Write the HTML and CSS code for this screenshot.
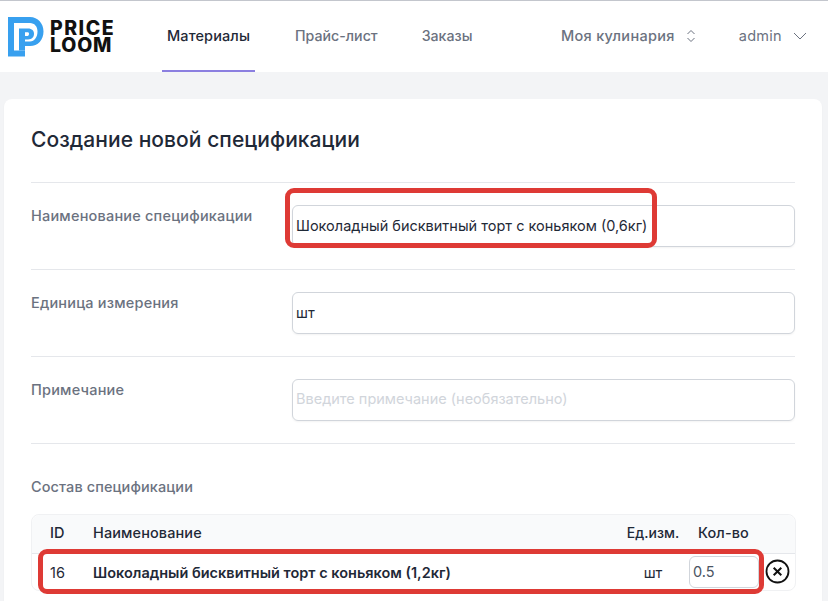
FILE: index.html
```html
<!DOCTYPE html>
<html lang="ru">
<head>
<meta charset="utf-8">
<title>Создание новой спецификации</title>
<link rel="stylesheet" href="styles.css">
</head>
<body>
<header class="topbar">
  <div class="logo">
    <svg class="logo-mark" width="36" height="40" viewBox="0 0 36 40">
      <path fill="#38a0ef" d="M0 0H22C30 0 35.500 6.500 35.500 14.500C35.500 23 30 29 22 29H15V24.500H22C26.500 24.500 29.500 20 29.500 14.500C29.500 9.500 26.500 6 22 6H6V33.500H17V39.500H0Z"/>
      <path fill="#38a0ef" d="M11 11.500H20C24 11.500 26 13.800 26 16.800C26 20 24 22.500 20 22.500H17V19H19.500C20.500 19 21 17.800 21 16.800C21 15.800 20.500 15.200 19.500 15.200H17V33.500H11Z"/>
    </svg>
    <div class="logo-text"><span class="logo-price">PRICE</span><span class="logo-loom">LOOM</span></div>
  </div>
  <nav class="nav">
    <a class="nav-item active">Материалы</a>
    <a class="nav-item">Прайс-лист</a>
    <a class="nav-item">Заказы</a>
  </nav>
  <div class="menus">
    <div class="menu org">Моя кулинария
      <svg width="10" height="14" viewBox="0 0 10 14"><path d="M1.500 5L5 1.500L8.500 5M1.500 9L5 12.500L8.500 9" fill="none" stroke="#6b7280" stroke-width="1"/></svg>
    </div>
    <div class="menu user">admin
      <svg width="14" height="8" viewBox="0 0 14 8"><path d="M1 1L7 7L13 1" fill="none" stroke="#6b7280" stroke-width="1"/></svg>
    </div>
  </div>
</header>
<main class="card">
  <h1 class="title">Создание новой спецификации</h1>
  <div class="row">
    <label class="label">Наименование спецификации</label>
    <div class="input">Шоколадный бисквитный торт с коньяком (0,6кг)</div>
  </div>
  <div class="row">
    <label class="label">Единица измерения</label>
    <div class="input">шт</div>
  </div>
  <div class="row">
    <label class="label">Примечание</label>
    <div class="input placeholder">Введите примечание (необязательно)</div>
  </div>
  <section class="composition">
    <h2 class="subtitle">Состав спецификации</h2>
    <div class="table">
      <div class="tr th">
        <div class="c-id">ID</div>
        <div class="c-name">Наименование</div>
        <div class="c-unit">Ед.изм.</div>
        <div class="c-qty">Кол-во</div>
      </div>
      <div class="tr td">
        <div class="c-id">16</div>
        <div class="c-name strong">Шоколадный бисквитный торт с коньяком (1,2кг)</div>
        <div class="c-unit">шт</div>
        <div class="c-qty"><div class="qty-input">0.5</div></div>
        <svg class="remove" width="25" height="25" viewBox="0 0 25 25"><circle cx="12.500" cy="12.500" r="11" fill="none" stroke="#111" stroke-width="1.800"/><path d="M8.700 8.700L16.300 16.300M16.300 8.700L8.700 16.300" stroke="#111" stroke-width="2"/></svg>
      </div>
    </div>
  </section>
</main>
<div class="mark mark-name"></div>
<div class="mark mark-row"></div>
</body>
</html>
```
FILE: styles.css
```css
* { box-sizing: border-box; }
html, body { margin: 0; height: 601px; overflow: hidden; }
body {
  background: #f3f4f6;
  font-family: Inter, "Noto Sans", sans-serif;
  color: #374151;
  position: relative;
}
.topbar {
  height: 72px;
  background: #fff;
  border-top: 1px solid #c3c6cd;
  display: flex;
  align-items: stretch;
  padding: 0 21px 0 8px;
}
.logo { display: flex; align-items: center; gap: 6px; width: 154px; }
.logo-text {
  display: flex;
  flex-direction: column;
  font-weight: 800;
  font-size: 19.500px;
  line-height: 17px;
  color: #111;
  margin-top: 1px;
}
.logo-price { letter-spacing: 1.500px; }
.logo-loom { letter-spacing: .800px; }
.nav { display: flex; gap: 33px; }
.nav-item {
  display: flex;
  align-items: center;
  padding: 0 5px;
  font-size: 14.200px;
  font-weight: 500;
  color: #6b7280;
  border-bottom: 2px solid transparent;
}
.nav-item.active {
  color: #1f2937;
  border-bottom-color: #8b7fe0;
  font-size: 14.500px;
  letter-spacing: .100px;
  margin-right: 2px;
}
.nav-item:last-child { margin-left: 1px; }
.menus { margin-left: auto; display: flex; align-items: center; gap: 43px; padding-bottom: 2px; }
.menu { display: flex; align-items: center; font-size: 14.500px; font-weight: 500; color: #6b7280; letter-spacing: .300px; }
.org { gap: 11px; }
.user { gap: 11px; font-weight: 400; }
.card {
  margin: 27px 6px 0 4px;
  background: #fff;
  border-radius: 8px;
  padding: 28px 27px 0;
  height: 520px;
  box-shadow: 0 1px 2px rgba(0,0,0,.04);
}
.title {
  margin: 0;
  height: 55px;
  font-size: 21px;
  line-height: 26px;
  font-weight: 500;
  color: #1f2937;
  letter-spacing: .050px;
}
.row {
  display: grid;
  grid-template-columns: 261px 1fr;
  border-top: 1px solid #e5e7eb;
  padding: 22px 0;
  height: 87px;
  width: 764px;
}
.label { font-size: 14.500px; font-weight: 500; color: #6b7280; line-height: 20px; margin-top: 1px; letter-spacing: .200px; }
.input {
  height: 42px;
  border: 1px solid #d1d5db;
  border-radius: 6px;
  padding: 0 3px;
  font-size: 14.500px;
  line-height: 40px;
  color: #1f2937;
  white-space: nowrap;
  box-shadow: 0 1px 2px rgba(0,0,0,.05);
}
.placeholder { color: #d1d5db; line-height: 38px; }
.composition { border-top: 1px solid #e5e7eb; width: 764px; padding-top: 33px; }
.subtitle { margin: 0 0 17px; font-size: 14.500px; line-height: 20px; font-weight: 500; color: #6b7280; letter-spacing: .100px; }
.table {
  width: 765px;
  border: 1px solid #f0f1f3;
  border-radius: 8px;
  font-size: 14.500px;
  color: #1f2937;
}
.tr { display: flex; align-items: center; position: relative; }
.th {
  height: 39px;
  padding-bottom: 3px;
  background: #f9fafb;
  border-bottom: 1px solid #e5e7eb;
  font-weight: 500;
  border-radius: 8px 8px 0 0;
  letter-spacing: .100px;
}
.td { height: 36px; }
.c-id { width: 61px; padding-left: 18px; }
.c-name { width: 531px; }
.strong { font-weight: 600; color: #1f2937; }
.c-unit { width: 58px; text-align: center; white-space: nowrap; }
.th .c-unit { font-size: 14px; letter-spacing: 0; }
.c-qty { width: 77px; padding-left: 7px; }
.th .c-qty { padding-left: 16px; white-space: nowrap; }
.qty-input {
  width: 70px;
  height: 32px;
  border: 1px solid #d1d5db;
  border-radius: 6px;
  padding: 0 3px;
  line-height: 30px;
  color: #4b5563;
}
.remove { position: absolute; left: 733px; top: 5px; }
.mark {
  position: absolute;
  border: 5px solid #de3a35;
  border-radius: 9px;
}
.mark-name { left: 285px; top: 188px; width: 372px; height: 60px; }
.mark-row { left: 38px; top: 549px; width: 726px; height: 45px; }
```
